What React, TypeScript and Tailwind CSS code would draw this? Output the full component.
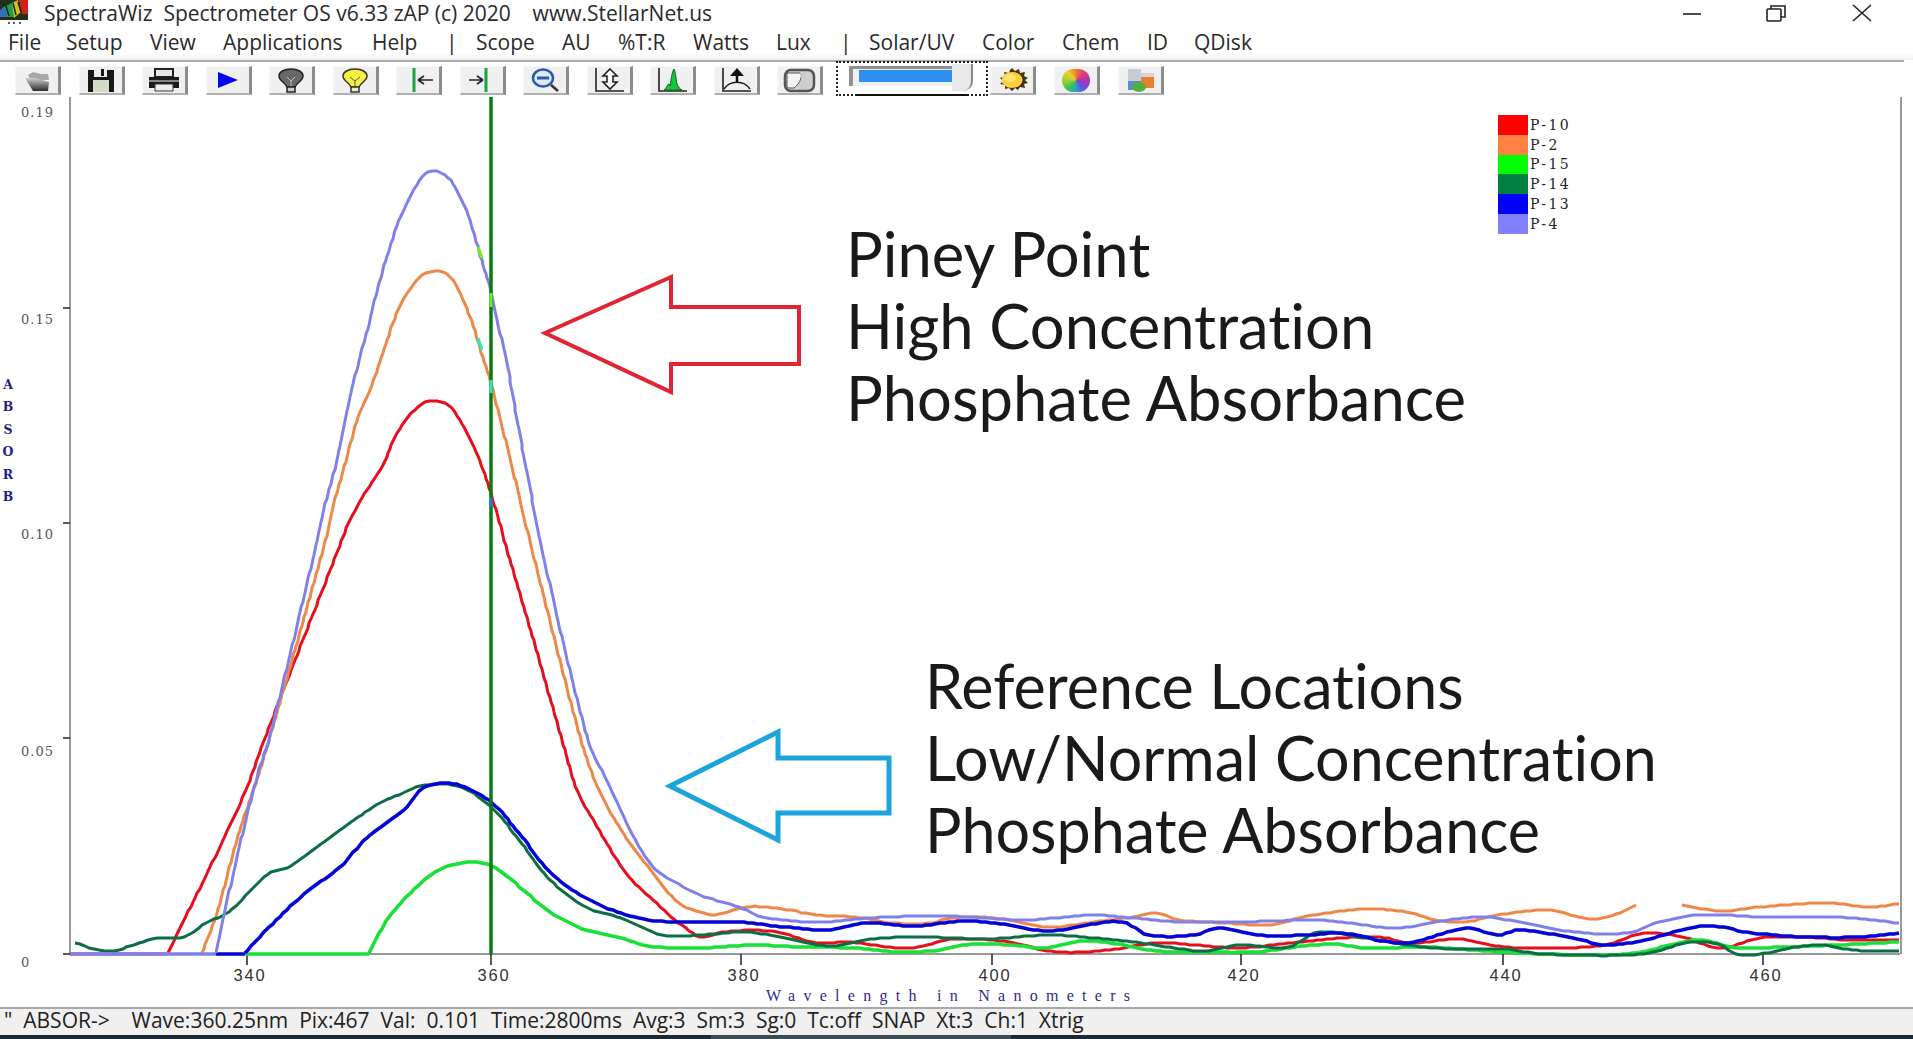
import React from "react";

type P = [number, number];

function rough(pts: P[]): string {
  const out: P[] = [];
  for (let i = 0; i < pts.length - 1; i++) {
    const p0 = pts[Math.max(0, i - 1)];
    const p1 = pts[i];
    const p2 = pts[i + 1];
    const p3 = pts[Math.min(pts.length - 1, i + 2)];
    const len = Math.hypot(p2[0] - p1[0], p2[1] - p1[1]);
    const dir = (a: P, b: P) => {
      const l = Math.hypot(b[0] - a[0], b[1] - a[1]) || 1;
      return [(b[0] - a[0]) / l, (b[1] - a[1]) / l];
    };
    const t1 = dir(p0, p2);
    const t2 = dir(p1, p3);
    const c1 = [p1[0] + t1[0] * len * 0.33, p1[1] + t1[1] * len * 0.33];
    const c2 = [p2[0] - t2[0] * len * 0.33, p2[1] - t2[1] * len * 0.33];
    const n = Math.max(1, Math.ceil(len / 5));
    for (let j = 0; j < n; j++) {
      const t = j / n;
      const u = 1 - t;
      const x = u * u * u * p1[0] + 3 * u * u * t * c1[0] + 3 * u * t * t * c2[0] + t * t * t * p2[0];
      const y = u * u * u * p1[1] + 3 * u * u * t * c1[1] + 3 * u * t * t * c2[1] + t * t * t * p2[1];
      out.push([Math.round(x), Math.round(y)]);
    }
  }
  out.push(pts[pts.length - 1]);
  return "M" + out.map((p) => `${p[0]} ${p[1]}`).join("L");
}

const red: P[] = [[168,953],[184,920],[204,880],[229,827],[246,790],[263,743],[338,550],[350,520],[367,490],[383,465],[395,437],[408,417],[422,404],[433,401],[448,405],[460,420],[472,443],[483,470],[492,497],[498,517],[507,550],[535,645],[562,740],[577,790],[595,823],[626,873],[653,900],[675,920],[693,933],[700,937],[731,931],[777,932],[816,943],[847,942],[909,948],[955,939],[1009,942],[1056,952],[1110,950],[1156,943],[1195,945],[1241,948],[1288,943],[1342,938],[1380,937],[1411,943],[1458,939],[1504,947],[1551,948],[1605,945],[1644,933],[1682,937],[1721,948],[1760,938],[1806,937],[1845,940],[1899,940]];
const orange1: P[] = [[202,953],[217,913],[237,840],[263,760],[323,550],[333,507],[347,457],[358,417],[370,390],[383,353],[393,323],[402,302],[413,285],[422,275],[435,271],[447,274],[457,287],[470,317],[480,348],[490,380],[500,418],[510,458],[520,500],[532,550],[581,740],[599,790],[621,830],[653,873],[679,903],[700,912],[715,915],[746,907],[777,908],[816,915],[855,917],[893,923],[932,923],[951,918],[994,918],[1048,927],[1094,922],[1133,917],[1156,913],[1179,920],[1226,923],[1272,925],[1303,917],[1334,912],[1373,909],[1411,913],[1435,920],[1466,922],[1497,915],[1551,910],[1589,919],[1620,913],[1636,905]];
const orange2: P[] = [[1682,905],[1721,911],[1760,907],[1829,903],[1868,907],[1899,904]];
const peri: P[] = [[216,953],[237,857],[258,773],[269,740],[315,550],[323,513],[337,460],[350,397],[360,357],[370,320],[378,287],[390,247],[400,218],[412,193],[422,177],[432,171],[445,175],[455,187],[465,207],[475,237],[483,265],[490,287],[497,320],[507,363],[517,420],[528,477],[542,550],[588,740],[608,783],[630,830],[653,867],[675,882],[700,895],[739,907],[762,917],[816,922],[870,918],[924,916],[971,917],[1025,920],[1094,915],[1133,918],[1179,922],[1241,922],[1311,920],[1342,922],[1396,928],[1435,922],[1481,917],[1520,922],[1574,932],[1628,933],[1659,922],[1698,915],[1767,917],[1837,917],[1899,923]];
const blue: P[] = [[245,953],[269,927],[309,890],[340,867],[367,838],[407,807],[423,788],[445,783],[465,787],[492,803],[519,833],[545,867],[572,890],[604,907],[648,920],[700,922],[739,922],[785,927],[831,930],[862,923],[917,926],[963,921],[1009,925],[1048,931],[1087,925],[1122,922],[1149,935],[1195,935],[1218,928],[1257,935],[1311,935],[1342,933],[1404,943],[1466,928],[1497,935],[1520,930],[1582,940],[1601,945],[1636,942],[1705,926],[1752,933],[1806,937],[1860,937],[1899,933]];
const dkgreen: P[] = [[75,943],[99,950],[119,950],[130,946],[157,938],[184,937],[206,923],[229,912],[251,890],[271,872],[287,868],[309,853],[336,833],[358,817],[380,803],[403,793],[425,785],[461,787],[492,808],[519,840],[550,880],[586,907],[621,918],[662,935],[700,935],[746,932],[785,938],[831,946],[870,939],[924,937],[986,939],[1048,935],[1094,938],[1141,943],[1203,951],[1241,945],[1288,947],[1319,932],[1357,937],[1435,948],[1504,949],[1543,954],[1644,954],[1690,942],[1721,945],[1736,954],[1760,954],[1790,948],[1821,945],[1852,950],[1899,951]];
const bright: P[] = [[369,953],[389,917],[421,883],[443,868],[472,862],[496,868],[523,890],[554,915],[586,930],[621,938],[648,946],[700,948],[754,945],[801,947],[855,948],[901,952],[940,950],[971,944],[1009,945],[1048,948],[1079,941],[1110,943],[1156,951],[1195,952],[1257,952],[1295,947],[1334,944],[1365,948],[1427,947],[1473,950],[1543,954],[1628,954],[1698,940],[1736,948],[1783,947],[1837,945],[1899,942]];

const xTicks: [number, string][] = [[247,"340"],[491,"360"],[741,"380"],[992,"400"],[1241,"420"],[1503,"440"],[1763,"460"]];
const yTicks: [number, string][] = [[112,"0.19"],[319,"0.15"],[534,"0.10"],[751,"0.05"],[962,"0"]];
const absorb = ["A","B","S","O","R","B"];
const legend: [string,string][] = [["P-10","#ff0000"],["P-2","#ff8040"],["P-15","#00ff00"],["P-14","#008040"],["P-13","#0000ff"],["P-4","#8080ff"]];

const menu: [string,string][] = [
  ["File","w-[58px]"],["Setup","w-[84px]"],["View","w-[73px]"],["Applications","w-[149px]"],["Help","w-[74px]"],["|","w-[30px]"],["Scope","w-[86px]"],["AU","w-[56px]"],["%T:R","w-[75px]"],["Watts","w-[83px]"],["Lux","w-[64px]"],["|","w-[29px]"],["Solar/UV","w-[113px]"],["Color","w-[80px]"],["Chem","w-[85px]"],["ID","w-[47px]"],["QDisk","w-[70px]"],
];

function I({ children }: { children: React.ReactNode }) {
  return <svg width="40" height="26" viewBox="0 0 40 26" className="block">{children}</svg>;
}

const icons: React.ReactNode[] = [
  <I key="open"><defs><linearGradient id="fo" x1="0" y1="0" x2="0" y2="1"><stop offset="0" stopColor="#d0d0d0"/><stop offset="1" stopColor="#2a2a2a"/></linearGradient></defs><path d="M11 8l5-3 8 2 7 0 1 6H14z" fill="#a8a8a8"/><path d="M8 11l10 0 14 4-1 9-15 0z" fill="url(#fo)"/></I>,
  <I key="save"><path d="M7 3h26v22H7z" fill="#181818"/><path d="M13 2h13v8H13z" fill="#eaeee6"/><path d="M20 2h3v7h-3z" fill="#181818"/><path d="M12 13h16v12H12z" fill="#d0dcc8"/></I>,
  <I key="print"><path d="M11 2h18v8H11z" fill="#e8e8e8" stroke="#222" strokeWidth="2"/><path d="M5 10h30v11H5z" fill="#1c1c1c"/><path d="M5 13h30v2H5z" fill="#888"/><path d="M11 17h18v7H11z" fill="#eeeeee" stroke="#333"/></I>,
  <I key="play"><path d="M10 5l20 8-20 8z" fill="#0808ee"/></I>,
  <I key="bulb1"><path d="M20 2c7 0 12 3 12 7 0 5-6 6-8 11h-8c-2-5-8-6-8-11 0-4 5-7 12-7z" fill="#686868" stroke="#222" strokeWidth="1.5"/><path d="M16 10l4 4 4-4M20 14v6" stroke="#bbb" fill="none"/><path d="M16 20h8v5h-8z" fill="#ccc" stroke="#222" strokeWidth="1.5"/></I>,
  <I key="bulb2"><path d="M20 2c7 0 12 3 12 7 0 5-6 6-8 11h-8c-2-5-8-6-8-11 0-4 5-7 12-7z" fill="#f8f040" stroke="#333" strokeWidth="1.5"/><path d="M15 10l5 4 5-4M20 14v6" stroke="#555" fill="none"/><path d="M16 20h8v5h-8z" fill="#eeeec0" stroke="#333" strokeWidth="1.5"/></I>,
  <I key="cl"><path d="M16 1v24" stroke="#12a838" strokeWidth="3"/><path d="M35 13H20M20 13l6-4M20 13l6 4" stroke="#222" strokeWidth="1.6" fill="none"/></I>,
  <I key="cr"><path d="M24 1v24" stroke="#12a838" strokeWidth="3"/><path d="M7 13h14M21 13l-6-4M21 13l-6 4" stroke="#222" strokeWidth="1.6" fill="none"/></I>,
  <I key="zoom"><ellipse cx="18" cy="11" rx="10" ry="8.5" fill="#e0e8f4" stroke="#2a5caa" strokeWidth="2.5"/><path d="M12 11h12" stroke="#2a5caa" strokeWidth="3"/><path d="M26 18l7 6" stroke="#333" strokeWidth="2.5"/></I>,
  <I key="updown"><path d="M7 1v23h28" stroke="#222" strokeWidth="1.6" fill="none"/><path d="M21 2l7 7h-4v6h4l-7 7-7-7h4V9h-4z" stroke="#222" strokeWidth="1.6" fill="#fff"/></I>,
  <I key="peak"><path d="M7 1v23h28" stroke="#222" strokeWidth="1.6" fill="none"/><path d="M12 23c3-2 3-6 5-6l1 2c1-6 2-14 4-17 2 4 2 12 3 15 1 3 3 5 5 6z" fill="#10c83c" stroke="#1a5a2a"/></I>,
  <I key="upc"><path d="M7 1v23h28" stroke="#222" strokeWidth="1.6" fill="none"/><path d="M8 22c6-9 20-9 26 0" stroke="#222" fill="none" strokeWidth="1.6"/><path d="M21 16V7" stroke="#111" strokeWidth="2.5"/><path d="M21 1l7 8H14z" fill="#111"/></I>,
  <I key="clock"><rect x="6" y="3" width="29" height="21" rx="6" fill="#cfcfcf" stroke="#555" strokeWidth="2.5"/><path d="M8 6h14c1 6-2 11-7 15H11c-2 0-3-1-3-3z" fill="#f4f4f4" stroke="#555"/><path d="M22 5v6" stroke="#eee"/></I>,
];

const tailIcons: React.ReactNode[] = [
  <I key="sun"><path d="M20 1l3 3 4-2 1 4 5-1-1 4 4 2-3 2 3 3-4 1 1 4-5-1-2 3-3-2-3 3-3-3-4 1 0-4-5-1 3-3-3-3 5-2-1-4 5 1 1-3z" fill="#4a300c"/><ellipse cx="20" cy="13" rx="10.5" ry="8" fill="#f8d040"/><ellipse cx="18" cy="11" rx="6" ry="4" fill="#fbe470"/></I>,
  <div key="wheel" className="w-[28px] h-[23px] rounded-full bg-[conic-gradient(#f08030,#e04070,#b030c0,#6050e0,#30a0c0,#40c050,#a0d030,#e8d030,#f08030)]" />,
  <I key="chem"><path d="M8 2h13v14H8z" fill="#c8ccd4"/><path d="M8 14h13v9H8z" fill="#5a90d0"/><path d="M21 6h13v5H21z" fill="#d4d4d4"/><path d="M21 10h13v11H21z" fill="#e88030"/><ellipse cx="19" cy="20" rx="7" ry="5" fill="#50b040"/></I>,
];

function Btn({ children, className = "" }: { children: React.ReactNode; className?: string }) {
  return (
    <div className={`w-[46px] h-[29px] shrink-0 flex items-center justify-center bg-[#f0f0f0] border-r-[3px] border-b-2 border-t border-l border-r-[#8c8c8c] border-b-[#b0b0b0] border-t-[#f8f8f8] border-l-[#f8f8f8] ${className}`}>
      {children}
    </div>
  );
}

export default function App() {
  return (
    <div className="flex flex-col h-screen w-full overflow-hidden bg-white text-[#222] font-['Open_Sans',sans-serif] [font-variant-ligatures:none]">
      {/* Title bar */}
      <div className="h-[26px] shrink-0 flex items-center relative">
        <svg width="28" height="24" viewBox="0 0 28 24" className="block shrink-0 self-start">
          <rect width="28" height="20" fill="#23301c"/>
          <path d="M19 0h9v14h-6z" fill="#d02010"/>
          <path d="M10 4l8-4 3 12-7 6z" fill="#d8c020"/>
          <path d="M2 8l10-5 2 14H4z" fill="#20a040"/>
          <path d="M0 10l6-3 1 10H0z" fill="#3070c0"/>
          <path d="M6 6l3 10M13 3l3 12M18 2l3 10" stroke="#123" strokeWidth="1.5"/>
          <circle cx="9" cy="23" r="1" fill="#224"/><circle cx="14" cy="23" r="1" fill="#224"/><circle cx="20" cy="23" r="1" fill="#224"/>
        </svg>
        <span className="ml-[16px] text-[21px] leading-none whitespace-pre text-[#2a2a2a]">SpectraWiz  Spectrometer OS v6.33 zAP (c) 2020    www.StellarNet.us</span>
        <div className="ml-auto flex items-center h-full">
          <svg width="20" height="20" viewBox="0 0 20 20" className="block mr-[64px]"><path d="M1 11h18" stroke="#222" strokeWidth="1.6"/></svg>
          <svg width="20" height="18" viewBox="0 0 20 18" className="block mr-[66px]"><rect x="1" y="5" width="14" height="12" rx="1" fill="none" stroke="#222" strokeWidth="1.6"/><path d="M5 5V2h14v11h-4" fill="none" stroke="#222" strokeWidth="1.6"/></svg>
          <svg width="20" height="18" viewBox="0 0 20 18" className="block mr-[41px]"><path d="M1 1l18 16M19 1L1 17" stroke="#222" strokeWidth="1.6"/></svg>
        </div>
      </div>
      {/* Menu */}
      <div className="h-[34px] shrink-0 flex items-center pl-[8px] pb-[2px] bg-gradient-to-b from-white from-80% to-[#f0f0f0]">
        {menu.map(([label, w], i) => (
          <span key={i} className={`${w} shrink-0 text-[21px] leading-none text-[#2a2a2a]`}>{label}</span>
        ))}
      </div>
      <div className="h-[2px] w-[1904px] shrink-0 bg-[#ababab]" />
      {/* Toolbar */}
      <div className="h-[35px] shrink-0 flex items-start pt-[4px] pl-[15px] gap-[17.5px]">
        {icons.map((ic, i) => <Btn key={i}>{ic}</Btn>)}
        <div className="relative w-[152px] h-[35px] shrink-0 mt-[-5px] ml-[-5px] mr-[-15px] border-2 border-dotted border-[#222]">
          <div className="absolute left-[11px] top-[3px] w-[124px] h-[20px] bg-[#eef2f8] border-t-[3px] border-l-[4px] border-t-[#909090] border-l-[#909090]">
            <div className="ml-[6px] mt-[1px] h-[12px] w-[99px] bg-[#2f8ff0]" />
          </div>
          <div className="absolute left-[114px] top-[1px] w-[21px] h-[27px] bg-[#e8e8e8] border-r-2 border-r-[#888] rounded-br-[10px]" />
          <div className="absolute left-[18px] bottom-[-2px] w-[113px] h-[2px] bg-[#111]" />
        </div>
        <Btn>{tailIcons[0]}</Btn>
        <Btn>{tailIcons[1]}</Btn>
        <Btn className="ml-[1px]">{tailIcons[2]}</Btn>
      </div>
      {/* Chart */}
      <div className="relative flex-1 min-h-0">
        <svg viewBox="0 97 1913 910" className="block w-full h-full" preserveAspectRatio="none">
          <path d="M70 97V954H1900" fill="none" stroke="#999" strokeWidth="2"/>
          <path d="M1901 97V954" fill="none" stroke="#999" strokeWidth="2"/>
          {[308,523,738,954].map(y => <path key={y} d={`M63 ${y}h7`} stroke="#222" strokeWidth="1.5"/>)}
          {xTicks.map(([x,t]) => (
            <g key={t}>
              <path d={`M${x} 954v11`} stroke="#222" strokeWidth="1.5"/>
              <text x={x+3} y="981" textAnchor="middle" fontFamily="Liberation Sans, sans-serif" fontSize="16.5" letterSpacing="1.8" fill="#333">{t}</text>
            </g>
          ))}
          {yTicks.map(([y,t]) => (
            <text key={t} x="21" y={y+5} fontFamily="DejaVu Serif, serif" fontSize="13" fill="#555" textLength={t==="0" ? undefined : 32}>{t}</text>
          ))}
          {absorb.map((c,i) => (
            <text key={i} x="8" y={389+i*22.4} textAnchor="middle" fontFamily="DejaVu Serif, serif" fontWeight="700" fontSize="12.5" fill="#1e1e8c">{c}</text>
          ))}
          <text x="766" y="1001" fontFamily="Liberation Serif, serif" fontSize="16" fill="#2c2c8c" textLength="364" lengthAdjust="spacing">Wavelength in Nanometers</text>

          <path d="M70 954H168" stroke="#e60f1e" strokeWidth="3"/>
          <path d={rough(red)} fill="none" stroke="#e60f1e" strokeWidth="3"/>
          <path d={rough(orange1)} fill="none" stroke="#ee8848" strokeWidth="3"/>
          <path d={rough(orange2)} fill="none" stroke="#ee8848" strokeWidth="3"/>
          <path d="M245 954H369" stroke="#18e038" strokeWidth="3.5"/>
          <path d={rough(bright)} fill="none" stroke="#18e038" strokeWidth="3.5"/>
          <path d={rough(dkgreen)} fill="none" stroke="#0c6e44" strokeWidth="3"/>
          <path d="M216 954H245" stroke="#0404d8" strokeWidth="3.5"/>
          <path d={rough(blue)} fill="none" stroke="#0404d8" strokeWidth="3.5"/>
          <path d="M70 954H216" stroke="#8080ea" strokeWidth="3.5"/>
          <path d={rough(peri)} fill="none" stroke="#8080ea" strokeWidth="3"/>
          <path d="M491 97V954" stroke="#0a7a12" strokeWidth="3.5"/>
          <path d="M478 247l4 11M491 293v14" stroke="#70f020" strokeWidth="3" fill="none"/>
          <path d="M478 338l4 12M491 380v13" stroke="#30e8c0" strokeWidth="3" fill="none"/>
          <path d="M491 498v9" stroke="#1080f0" strokeWidth="3"/>

          <path d="M545 333L671 277V307H799V364H671V392Z" fill="none" stroke="#e02434" strokeWidth="4"/>
          <path d="M670 786L778 732V758H889V813H778V840Z" fill="none" stroke="#1ea4dc" strokeWidth="5"/>
        </svg>
        {/* Legend */}
        <div className="absolute left-[1498px] top-[18px] flex flex-col">
          {legend.map(([n,c]) => (
            <div key={n} className="flex items-center h-[19.8px]">
              <div className="w-[30px] h-full" style={{ backgroundColor: c }} />
              <span className="ml-[2px] font-['DejaVu_Serif',serif] text-[14px] leading-none tracking-[2.5px] text-[#222]">{n}</span>
            </div>
          ))}
        </div>
        {/* Annotations */}
        <div className="absolute left-[846px] top-[120px] font-['Lato',sans-serif] text-[61.5px] leading-[72px] text-[#1a1a1a] whitespace-nowrap">
          <div>Piney Point</div>
          <div>High Concentration</div>
          <div>Phosphate Absorbance</div>
        </div>
        <div className="absolute left-[925px] top-[553px] font-['Lato',sans-serif] text-[61px] leading-[72px] text-[#1a1a1a] whitespace-nowrap">
          <div>Reference Locations</div>
          <div>Low/Normal Concentration</div>
          <div>Phosphate Absorbance</div>
        </div>
      </div>
      {/* Status */}
      <div className="h-[28px] shrink-0 flex items-center pl-[4px] pb-[4px] bg-[#f0f0f0] border-t-2 border-[#a8a8a8]">
        <span className="text-[21px] leading-none whitespace-pre text-[#222]">"  ABSOR-&gt;    Wave:360.25nm  Pix:467  Val:  0.101  Time:2800ms  Avg:3  Sm:3  Sg:0  Tc:off  SNAP  Xt:3  Ch:1  Xtrig</span>
      </div>
      <div className="h-[4px] shrink-0 flex bg-[#1c2a36]">
        <div className="ml-[711px] w-[300px] bg-[#3c4c54]" />
      </div>
    </div>
  );
}
